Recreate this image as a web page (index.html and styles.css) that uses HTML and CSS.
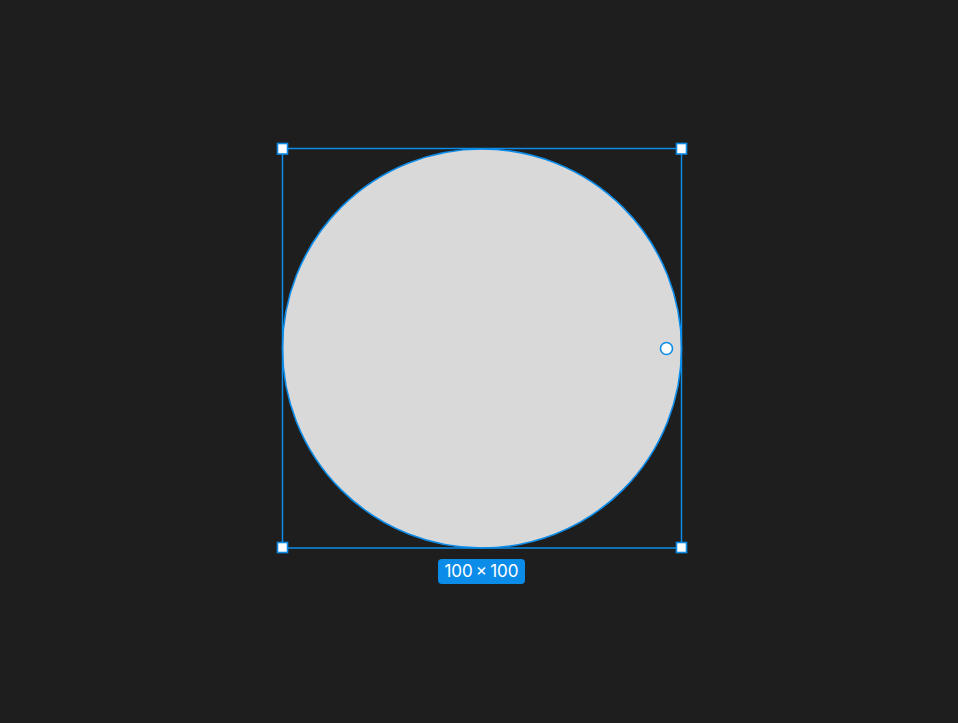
FILE: index.html
```html
<!DOCTYPE html>
<html>
<head>
<meta charset="utf-8">
<link rel="stylesheet" href="styles.css">
</head>
<body>
<div class="canvas">
  <svg class="art" width="958" height="723" viewBox="0 0 958 723">
    <circle cx="482" cy="348.5" r="199.5" fill="#d9d9d9" stroke="#0c8ce9" stroke-width="1.6"/>
    <rect x="282.5" y="148.5" width="399" height="399.5" fill="none" stroke="#0c8ce9" stroke-width="1.5"/>
    <rect x="277.5" y="143.5" width="10" height="10.5" fill="#fff" stroke="#0c8ce9" stroke-width="1.6"/>
    <rect x="676.5" y="143.5" width="10" height="10.5" fill="#fff" stroke="#0c8ce9" stroke-width="1.6"/>
    <rect x="277.5" y="542.5" width="10" height="10" fill="#fff" stroke="#0c8ce9" stroke-width="1.6"/>
    <rect x="676.5" y="542.5" width="10" height="10" fill="#fff" stroke="#0c8ce9" stroke-width="1.6"/>
    <circle cx="666.5" cy="348.5" r="6" fill="#fff" stroke="#0c8ce9" stroke-width="1.6"/>
  </svg>
  <div class="size-label">100&#8201;×&#8201;100</div>
</div>
</body>
</html>
```
FILE: styles.css
```css
html, body {
  margin: 0;
  padding: 0;
  background: #1e1e1e;
}
.canvas {
  position: relative;
  width: 958px;
  height: 723px;
  overflow: hidden;
  background: #1e1e1e;
}
.art {
  position: absolute;
  left: 0;
  top: 0;
}
.size-label {
  position: absolute;
  left: 438px;
  top: 559px;
  width: 87px;
  height: 25px;
  box-sizing: border-box;
  border-radius: 4px;
  background: #0c8ce9;
  color: #fff;
  font-family: Inter, "Noto Sans", sans-serif;
  font-size: 17px;
  line-height: 25px;
  text-align: center;
  white-space: nowrap;
}
```
